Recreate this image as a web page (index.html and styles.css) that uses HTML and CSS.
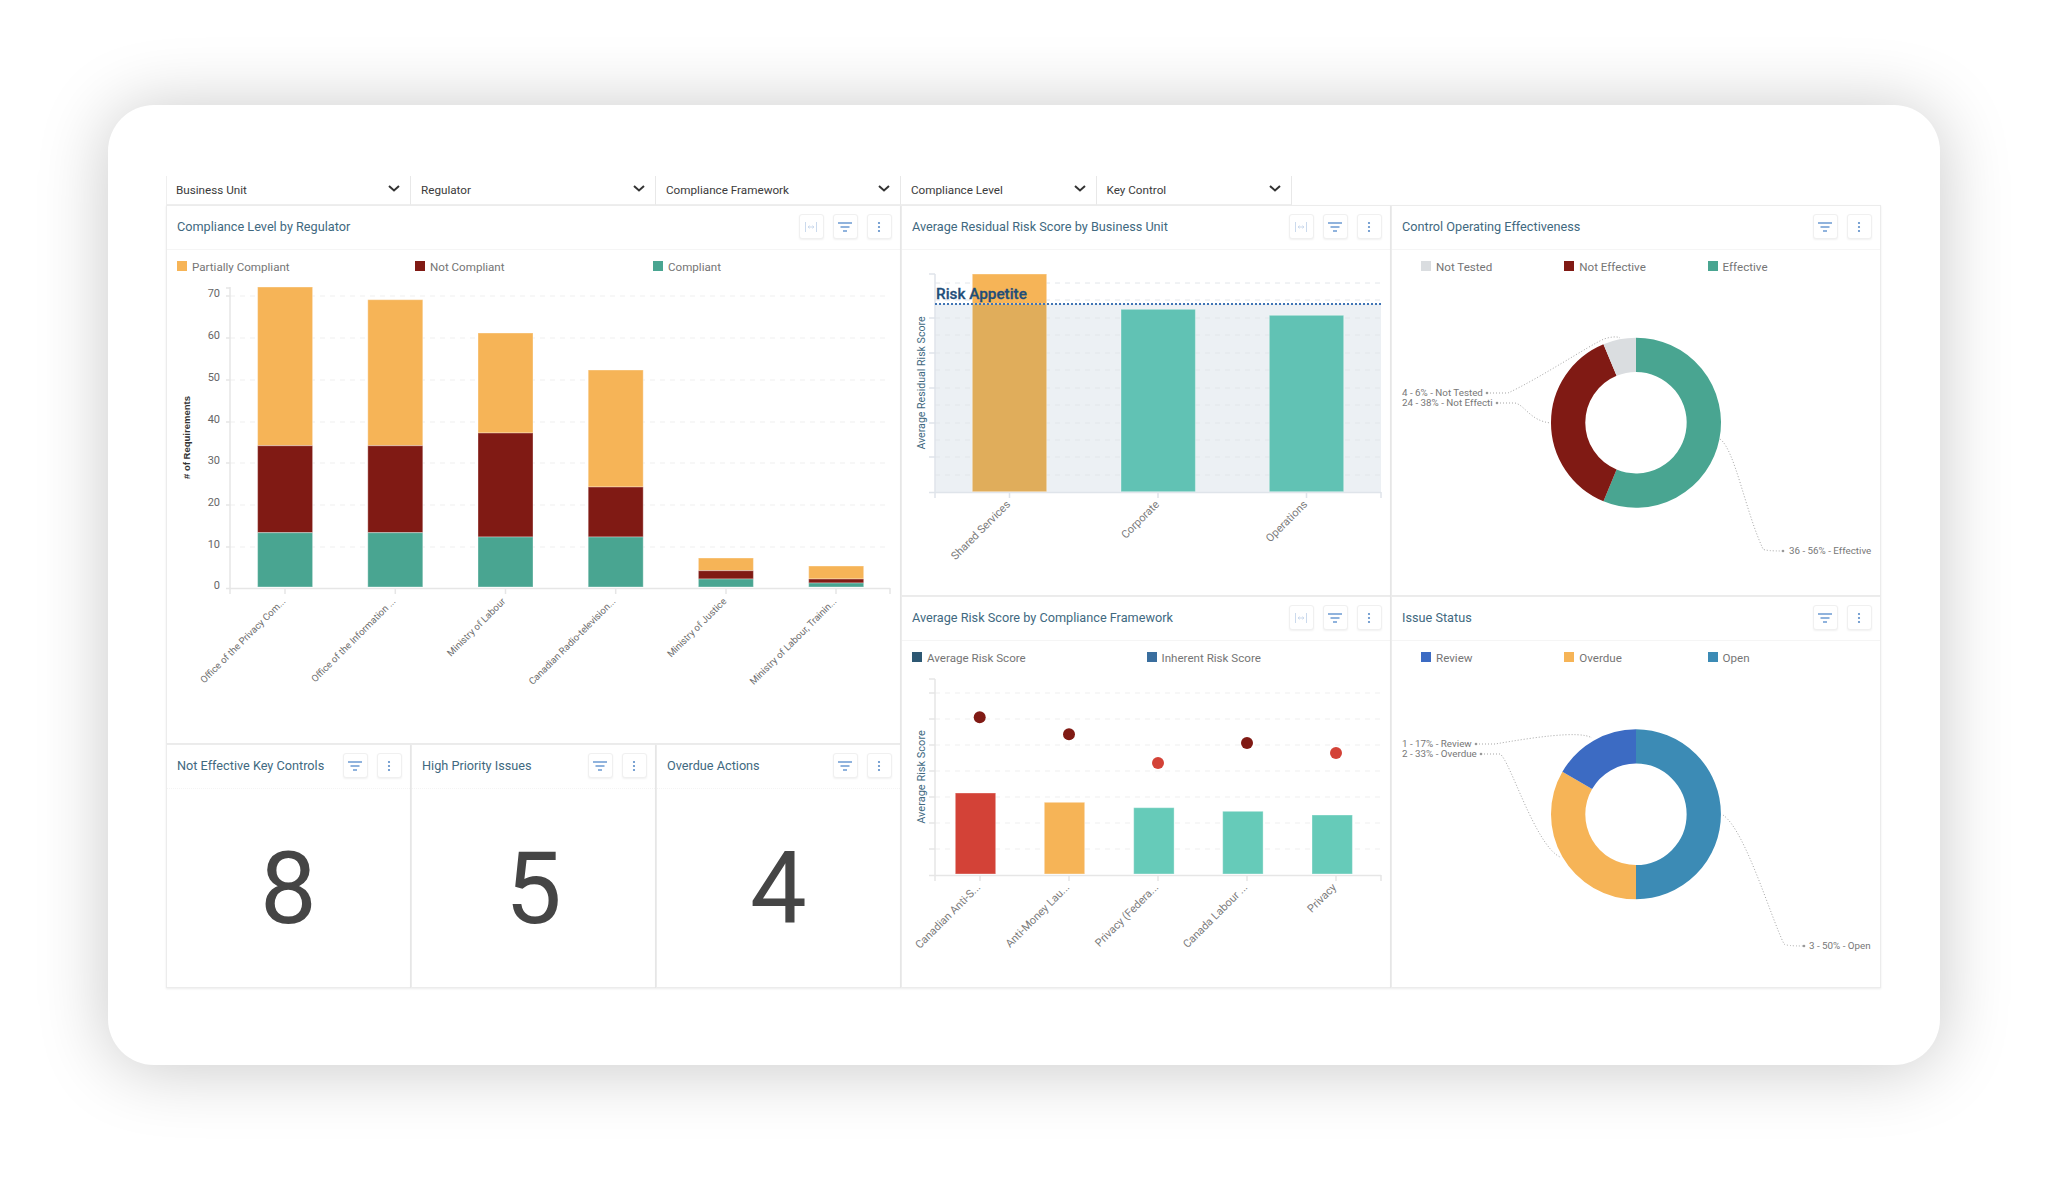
FILE: index.html
```html
<!DOCTYPE html>
<html lang="en">
<head>
  <meta charset="UTF-8"/>
  <title>Compliance Dashboard</title>
  <link rel="stylesheet" href="styles.css">
</head>
<body>
  <svg class="icon-defs" width="0" height="0">
    <symbol id="i-expand" viewBox="0 0 12 10"><path d="M.5 0v10M11.5 0v10M3 5h6M3 5l1.6-1.3M3 5l1.6 1.3M9 5L7.4 3.7M9 5L7.4 6.3"/></symbol>
    <symbol id="i-filter" viewBox="0 0 14 10"><path d="M0 1h14M2.5 5h9M5 9h4"/></symbol>
    <symbol id="i-more" viewBox="0 0 4 12"><circle cx="2" cy="2" r="1.1"/><circle cx="2" cy="6" r="1.1"/><circle cx="2" cy="10" r="1.1"/></symbol>
    <symbol id="i-chev" viewBox="0 0 12 7"><path d="M1 1l5 4.5L11 1"/></symbol>
  </svg>

  <div class="frame">
    <!-- filters -->
    <div class="filters">
      <div class="filter wide"><span>Business Unit</span><svg class="chev"><use href="#i-chev"/></svg></div>
      <div class="filter wide"><span>Regulator</span><svg class="chev"><use href="#i-chev"/></svg></div>
      <div class="filter wide"><span>Compliance Framework</span><svg class="chev"><use href="#i-chev"/></svg></div>
      <div class="filter"><span>Compliance Level</span><svg class="chev"><use href="#i-chev"/></svg></div>
      <div class="filter"><span>Key Control</span><svg class="chev"><use href="#i-chev"/></svg></div>
    </div>

    <div class="board">
      <div class="col-left">
        <!-- stacked bars -->
        <div class="panel panel-main">
          <div class="panel-head">
            <h2>Compliance Level by Regulator</h2>
            <div class="tools">
              <button class="icon-btn"><svg class="ic-expand"><use href="#i-expand"/></svg></button>
              <button class="icon-btn"><svg class="ic-filter"><use href="#i-filter"/></svg></button>
              <button class="icon-btn"><svg class="ic-more"><use href="#i-more"/></svg></button>
            </div>
          </div>
          <div class="legend legend-main">
            <div class="legend-item"><i class="swatch c-orange"></i>Partially Compliant</div>
            <div class="legend-item"><i class="swatch c-maroon"></i>Not Compliant</div>
            <div class="legend-item"><i class="swatch c-green"></i>Compliant</div>
          </div>
          <svg class="chart" width="733" height="459" viewBox="167 284 733 459">
            <g class="grid">
              <path d="M230 296H890M230 338H890M230 380H890M230 422H890M230 463H890M230 505H890M230 547H890"/>
            </g>
            <path class="axis" d="M230 287V594M226 296h4M226 338h4M226 380h4M226 422h4M226 463h4M226 505h4M226 547h4M226 288h4M226 588.5H890M285 588v6M395.300 588v6M505.500 588v6M615.700 588v6M726 588v6M836 588v6M890 588v6"/>
            <g class="tick-y">
              <text x="220" y="297">70</text><text x="220" y="339">60</text><text x="220" y="381">50</text><text x="220" y="423">40</text>
              <text x="220" y="464">30</text><text x="220" y="506">20</text><text x="220" y="548">10</text><text x="220" y="589">0</text>
            </g>
            <text class="axis-title-bold" transform="translate(190 437.500) rotate(-90)"># of Requirements</text>
            <g class="bars">
              <rect class="f-orange" x="257.600" y="287" width="55" height="158.700"/><rect class="f-maroon" x="257.600" y="445.700" width="55" height="87"/><rect class="f-green" x="257.600" y="532.700" width="55" height="54.300"/>
              <rect class="f-orange" x="367.800" y="299.700" width="55" height="146"/><rect class="f-maroon" x="367.800" y="445.700" width="55" height="87"/><rect class="f-green" x="367.800" y="532.700" width="55" height="54.300"/>
              <rect class="f-orange" x="478" y="333" width="55" height="100"/><rect class="f-maroon" x="478" y="433" width="55" height="104"/><rect class="f-green" x="478" y="537" width="55" height="50"/>
              <rect class="f-orange" x="588.200" y="370" width="55" height="117"/><rect class="f-maroon" x="588.200" y="487" width="55" height="50"/><rect class="f-green" x="588.200" y="537" width="55" height="50"/>
              <rect class="f-orange" x="698.400" y="558" width="55" height="12.700"/><rect class="f-maroon" x="698.400" y="570.700" width="55" height="8.300"/><rect class="f-green" x="698.400" y="579" width="55" height="8"/>
              <rect class="f-orange" x="808.700" y="566" width="55" height="13"/><rect class="f-maroon" x="808.700" y="579" width="55" height="4"/><rect class="f-green" x="808.700" y="583" width="55" height="4"/>
            </g>
            <g class="tick-x tick-x-small">
              <text transform="translate(286 602) rotate(-45)">Office of the Privacy Com...</text>
              <text transform="translate(396 602) rotate(-45)">Office of the Information ...</text>
              <text transform="translate(506 602) rotate(-45)">Ministry of Labour</text>
              <text transform="translate(616 602) rotate(-45)">Canadian Radio-television...</text>
              <text transform="translate(727 602) rotate(-45)">Ministry of Justice</text>
              <text transform="translate(837 602) rotate(-45)">Ministry of Labour, Trainin...</text>
            </g>
          </svg>
        </div>

        <!-- big numbers -->
        <div class="kpis">
          <div class="panel kpi">
            <div class="panel-head head-dotted">
              <h2>Not Effective Key Controls</h2>
              <div class="tools">
                <button class="icon-btn"><svg class="ic-filter"><use href="#i-filter"/></svg></button>
                <button class="icon-btn"><svg class="ic-more"><use href="#i-more"/></svg></button>
              </div>
            </div>
            <div class="kpi-value">8</div>
          </div>
          <div class="panel kpi">
            <div class="panel-head head-dotted">
              <h2>High Priority Issues</h2>
              <div class="tools">
                <button class="icon-btn"><svg class="ic-filter"><use href="#i-filter"/></svg></button>
                <button class="icon-btn"><svg class="ic-more"><use href="#i-more"/></svg></button>
              </div>
            </div>
            <div class="kpi-value">5</div>
          </div>
          <div class="panel kpi">
            <div class="panel-head head-dotted">
              <h2>Overdue Actions</h2>
              <div class="tools">
                <button class="icon-btn"><svg class="ic-filter"><use href="#i-filter"/></svg></button>
                <button class="icon-btn"><svg class="ic-more"><use href="#i-more"/></svg></button>
              </div>
            </div>
            <div class="kpi-value">4</div>
          </div>
        </div>
      </div>

      <div class="col">
        <!-- residual risk -->
        <div class="panel panel-top">
          <div class="panel-head">
            <h2>Average Residual Risk Score by Business Unit</h2>
            <div class="tools">
              <button class="icon-btn"><svg class="ic-expand"><use href="#i-expand"/></svg></button>
              <button class="icon-btn"><svg class="ic-filter"><use href="#i-filter"/></svg></button>
              <button class="icon-btn"><svg class="ic-more"><use href="#i-more"/></svg></button>
            </div>
          </div>
          <svg class="chart" width="488" height="345" viewBox="902 250 488 345">
            <rect class="band" x="935" y="304" width="446" height="188"/>
            <g class="grid grid-band">
              <path d="M935 283H1381M935 300H1381M935 318H1381M935 335H1381M935 353H1381M935 370H1381M935 388H1381M935 405H1381M935 423H1381M935 440H1381M935 457H1381M935 475H1381"/>
            </g>
            <path class="axis axis-blue" d="M935 274V498M929 274h6M929 318h6M929 353h6M929 388h6M929 423h6M929 457h6M929 492.500H1381M1009.500 492v6M1158 492v6M1306.500 492v6M1381 492v6"/>
            <g class="bars">
              <rect class="f-orange" x="972.300" y="274" width="74.400" height="30"/>
              <rect class="f-ochre" x="972.300" y="304" width="74.400" height="187.700"/>
              <rect class="f-teal" x="1121" y="309.300" width="74.400" height="182.400"/>
              <rect class="f-teal" x="1269.300" y="315.300" width="74.400" height="176.400"/>
            </g>
            <path class="risk-line" d="M935 304H1381"/>
            <text class="risk-label" x="936" y="299">Risk Appetite</text>
            <text class="axis-title axis-title-tight" transform="translate(925 383) rotate(-90)">Average Residual Risk Score</text>
            <g class="tick-x">
              <text transform="translate(1011 505) rotate(-45)">Shared Services</text>
              <text transform="translate(1160 505) rotate(-45)">Corporate</text>
              <text transform="translate(1308 505) rotate(-45)">Operations</text>
            </g>
          </svg>
        </div>

        <!-- risk by framework -->
        <div class="panel panel-bottom">
          <div class="panel-head">
            <h2>Average Risk Score by Compliance Framework</h2>
            <div class="tools">
              <button class="icon-btn"><svg class="ic-expand"><use href="#i-expand"/></svg></button>
              <button class="icon-btn"><svg class="ic-filter"><use href="#i-filter"/></svg></button>
              <button class="icon-btn"><svg class="ic-more"><use href="#i-more"/></svg></button>
            </div>
          </div>
          <div class="legend legend-two">
            <div class="legend-item"><i class="swatch c-slate"></i>Average Risk Score</div>
            <div class="legend-item"><i class="swatch c-steel"></i>Inherent Risk Score</div>
          </div>
          <svg class="chart" width="488" height="312" viewBox="902 675 488 312">
            <g class="grid">
              <path d="M935 693H1381M935 719H1381M935 745H1381M935 771H1381M935 797H1381M935 823H1381M935 849H1381"/>
            </g>
            <path class="axis" d="M935 679V881M929 679h6M929 693h6M929 719h6M929 745h6M929 771h6M929 797h6M929 823h6M929 849h6M929 875.500H1381M980 875v6M1069 875v6M1158 875v6M1247 875v6M1336 875v6M1381 875v6"/>
            <g class="bars">
              <rect class="f-red" x="955.300" y="793" width="40.400" height="81"/>
              <rect class="f-orange" x="1044.300" y="802.300" width="40.400" height="71.700"/>
              <rect class="f-mint" x="1133.700" y="807.700" width="40.400" height="66.300"/>
              <rect class="f-mint" x="1222.700" y="811.300" width="40.400" height="62.700"/>
              <rect class="f-mint" x="1312" y="815" width="40.400" height="59"/>
            </g>
            <circle class="f-maroon" cx="979.700" cy="717.300" r="6"/>
            <circle class="f-maroon" cx="1069" cy="734.300" r="6"/>
            <circle class="f-red" cx="1158" cy="763" r="6"/>
            <circle class="f-maroon" cx="1247" cy="743" r="6"/>
            <circle class="f-red" cx="1336" cy="753" r="6"/>
            <text class="axis-title" transform="translate(925 777) rotate(-90)">Average Risk Score</text>
            <g class="tick-x">
              <text transform="translate(981 888) rotate(-45)">Canadian Anti-S...</text>
              <text transform="translate(1070 888) rotate(-45)">Anti-Money Lau...</text>
              <text transform="translate(1159 888) rotate(-45)">Privacy (Federa...</text>
              <text transform="translate(1248 888) rotate(-45)">Canada Labour ...</text>
              <text transform="translate(1337 888) rotate(-45)">Privacy</text>
            </g>
          </svg>
        </div>
      </div>

      <div class="col">
        <!-- operating effectiveness -->
        <div class="panel panel-top">
          <div class="panel-head">
            <h2>Control Operating Effectiveness</h2>
            <div class="tools">
              <button class="icon-btn"><svg class="ic-filter"><use href="#i-filter"/></svg></button>
              <button class="icon-btn"><svg class="ic-more"><use href="#i-more"/></svg></button>
            </div>
          </div>
          <div class="legend legend-donut">
            <div class="legend-item"><i class="swatch c-grey"></i>Not Tested</div>
            <div class="legend-item"><i class="swatch c-maroon"></i>Not Effective</div>
            <div class="legend-item"><i class="swatch c-green"></i>Effective</div>
          </div>
          <svg class="chart" width="488" height="311" viewBox="1392 284 488 311">
            <g class="slices">
              <path class="s-green" d="M1636 354.850A67.850 67.850 0 1 1 1610.030 485.390"/>
              <path class="s-maroon" d="M1610.030 485.390A67.850 67.850 0 0 1 1610.030 360.010"/>
              <path class="s-grey" d="M1610.030 360.010A67.850 67.850 0 0 1 1636 354.850"/>
            </g>
            <path class="leader" d="M1487 393H1508C1540 378 1590 345 1604 339C1610 337 1617 336 1620 338"/>
            <path class="leader" d="M1497 403H1515C1525 405 1530 421 1551 423"/>
            <path class="leader" d="M1720 439C1735 450 1745 510 1763 549Q1765 551 1783 551"/>
            <circle class="dot" cx="1487" cy="393" r="1.300"/><circle class="dot" cx="1497" cy="403" r="1.300"/><circle class="dot" cx="1783" cy="551" r="1.300"/>
            <g class="slice-label">
              <text x="1402" y="396">4 - 6% - Not Tested</text>
              <text x="1402" y="406">24 - 38% - Not Effecti</text>
              <text x="1789" y="554">36 - 56% - Effective</text>
            </g>
          </svg>
        </div>

        <!-- issue status -->
        <div class="panel panel-bottom">
          <div class="panel-head">
            <h2>Issue Status</h2>
            <div class="tools">
              <button class="icon-btn"><svg class="ic-filter"><use href="#i-filter"/></svg></button>
              <button class="icon-btn"><svg class="ic-more"><use href="#i-more"/></svg></button>
            </div>
          </div>
          <div class="legend legend-donut">
            <div class="legend-item"><i class="swatch c-blue"></i>Review</div>
            <div class="legend-item"><i class="swatch c-orange"></i>Overdue</div>
            <div class="legend-item"><i class="swatch c-ocean"></i>Open</div>
          </div>
          <svg class="chart" width="488" height="312" viewBox="1392 675 488 312">
            <g class="slices">
              <path class="s-ocean" d="M1636 746.450A67.850 67.850 0 0 1 1636 882.150"/>
              <path class="s-orange" d="M1636 882.150A67.850 67.850 0 0 1 1577.240 780.375"/>
              <path class="s-blue" d="M1577.240 780.375A67.850 67.850 0 0 1 1636 746.450"/>
            </g>
            <path class="leader" d="M1476 744H1495C1530 738 1580 730 1592 738"/>
            <path class="leader" d="M1481 754H1500C1510 760 1535 845 1560 857"/>
            <path class="leader" d="M1723 815C1745 830 1770 915 1784 944Q1786 946 1804 946"/>
            <circle class="dot" cx="1476" cy="744" r="1.300"/><circle class="dot" cx="1481" cy="754" r="1.300"/><circle class="dot" cx="1804" cy="946" r="1.300"/>
            <g class="slice-label">
              <text x="1402" y="747">1 - 17% - Review</text>
              <text x="1402" y="757">2 - 33% - Overdue</text>
              <text x="1809" y="949">3 - 50% - Open</text>
            </g>
          </svg>
        </div>
      </div>
    </div>
  </div>
</body>
</html>
```

FILE: styles.css
```css
* { box-sizing: border-box; }
html, body { margin: 0; height: 100%; }
body { width: 2048px; height: 1177px; padding: 105px 108px 112px; background: #fff; font-family: Roboto, "Liberation Sans", sans-serif; overflow: hidden; }
.icon-defs { position: absolute; }

.frame { width: 1832px; height: 960px; padding: 71px 59px 77px 58px; background: #fff; border-radius: 46px; box-shadow: 0 3px 70px rgba(0,0,0,.22); }

/* filters */
.filters { display: flex; height: 29px; }
.filter { width: 195.500px; display: flex; align-items: center; justify-content: space-between; padding: 0 10px 1px 10px; border-right: 1px solid #e8e8e8; border-bottom: 1px solid #efefef; font-size: 11.700px; color: #3a3a3a; }
.filter.wide { width: 245px; }
.filter:first-child { border-left: 1px solid #efefef; padding-left: 9px; }
.chev { width: 12px; height: 7px; margin-bottom: 3px; fill: none; stroke: #333; stroke-width: 2; }

/* layout */
.board { display: flex; width: 1715px; height: 783px; }
.col-left { width: 735px; display: flex; flex-direction: column; }
.col { width: 490px; display: flex; flex-direction: column; }
.kpis { display: flex; height: 244px; }

.panel { border: 1px solid #ececec; background: #fff; box-shadow: 0 1px 2px rgba(0,0,0,.08); }
.panel-main { height: 539px; }
.panel-top { height: 391px; }
.panel-bottom { height: 392px; }
.kpi { width: 245px; }

.panel-head { height: 44px; display: flex; align-items: center; justify-content: space-between; padding: 0 8.500px 2px 10px; border-bottom: 1px solid #f5f5f5; }
.head-dotted { border-bottom: 1px dotted #f4f4f4; }
.panel-head h2 { margin: 0; font-size: 12.700px; font-weight: 400; color: #41697f; }
.tools { display: flex; gap: 9.500px; }
.icon-btn { width: 24.500px; height: 25px; padding: 0; display: flex; align-items: center; justify-content: center; background: #fff; border: 1px solid #f0f0f0; border-radius: 3px; box-shadow: 0 1px 2px rgba(0,0,0,.06); }
.ic-expand { width: 12px; height: 10px; fill: none; stroke: #c6d7ec; stroke-width: 1; opacity: .9; }
.ic-filter { width: 14px; height: 10px; fill: none; stroke: #6c9bd2; stroke-width: 1.400; }
.ic-more { width: 4px; height: 12px; fill: #5b8cc8; }

/* legends */
.legend { display: flex; height: 34px; padding-bottom: 1px; align-items: center; font-size: 11.600px; color: #757575; }
.legend-item { display: flex; align-items: center; gap: 5px; }
.legend-main { padding-left: 10px; }
.legend-main .legend-item { width: 238px; }
.legend-two { padding-left: 10px; }
.legend-two .legend-item { width: 234.500px; }
.legend-donut { padding-left: 29px; }
.legend-donut .legend-item { width: 143.300px; }
.swatch { width: 10px; height: 10px; margin-bottom: 1px; }
.c-orange { background: #f6b457; }
.c-maroon { background: #801a14; }
.c-green { background: #49a591; }
.c-grey { background: #dadde0; }
.c-blue { background: #3c6bc3; }
.c-ocean { background: #3c8bb5; }
.c-slate { background: #2d5873; }
.c-steel { background: #3a6e9e; }

/* charts */
.chart { display: block; overflow: visible; font-family: Roboto, "Liberation Sans", sans-serif; }
.grid path { fill: none; stroke: #efefef; stroke-width: 1; stroke-dasharray: 5 5; }
.grid-band path { stroke: #e2e6ea; }
.axis { fill: none; stroke: #e6e6e6; stroke-width: 1.500; }
.axis-blue { stroke: #dfe4ea; }
.band { fill: #ecf0f4; }
.tick-y text { font-size: 11px; fill: #666; text-anchor: end; }
.tick-x text { font-size: 11px; fill: #7a7a7a; text-anchor: end; }
.tick-x-small text { font-size: 9.600px; fill: #6e6e6e; }
.axis-title { font-size: 11px; fill: #41697f; text-anchor: middle; }
.axis-title-tight { font-size: 10.600px; }
.axis-title-bold { font-family: "Liberation Sans", sans-serif; font-size: 9.500px; font-weight: 700; fill: #333; text-anchor: middle; }
.bars rect { stroke: rgba(255,255,255,.35); stroke-width: 1; }
.f-orange { fill: #f6b457; }
.f-maroon { fill: #801a14; }
.f-green { fill: #49a591; }
.f-ochre { fill: #e0ad5b; }
.f-teal { fill: #61c2b4; }
.f-mint { fill: #66cbb9; }
.f-red { fill: #d34237; }
.risk-line { fill: none; stroke: #3f74b5; stroke-width: 2; stroke-dasharray: 2 2; }
.risk-label { font-size: 15.300px; font-weight: 500; fill: #1f4e79; stroke: #1f4e79; stroke-width: .3px; }

/* donuts */
.slices path { fill: none; stroke-width: 34.300; }
.s-green { stroke: #49a591; }
.s-maroon { stroke: #801a14; }
.s-grey { stroke: #dadde0; }
.s-ocean { stroke: #3c8bb5; }
.s-orange { stroke: #f6b457; }
.s-blue { stroke: #3c6bc3; }
.leader { fill: none; stroke: #a5a5a5; stroke-width: 1; stroke-dasharray: 1 2; }
.dot { fill: #999; }
.slice-label text { font-size: 9.800px; fill: #777; }

/* big numbers */
.kpi-value { height: 198px; display: flex; align-items: center; justify-content: center; padding-top: 1px; font-size: 101px; color: #454545; }
```
